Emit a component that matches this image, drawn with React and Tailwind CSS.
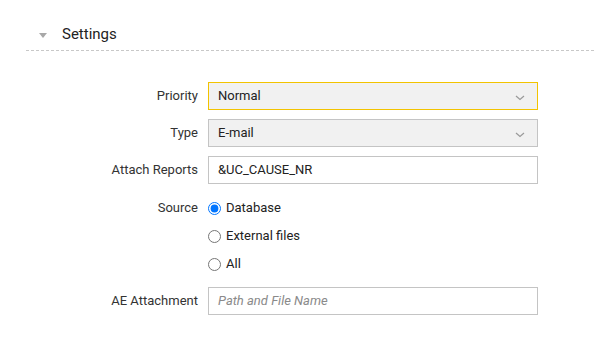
import React from "react";

function Chevron() {
  return (
    <svg width="10" height="6" viewBox="0 0 10 6" className="absolute right-[12px] top-[12px]">
      <path d="M1 1 L5 4.5 L9 1" fill="none" stroke="#9a9a9a" strokeWidth="1.2" />
    </svg>
  );
}

function Label({ children }) {
  return (
    <div className="h-[28px] flex items-center justify-end text-[13px] text-[#333]">{children}</div>
  );
}

function Radio({ checked, label }) {
  return (
    <label className="h-[28px] flex items-center gap-[5px] text-[13px] text-[#222]">
      <input type="radio" name="src" defaultChecked={checked} className="m-0 w-[13px] h-[13px]" />
      <span>{label}</span>
    </label>
  );
}

export default function App() {
  return (
    <div className="w-[594px] h-[344px] bg-white" style={{ fontFamily: "Roboto, 'Liberation Sans', sans-serif" }}>
      <div className="pl-[26px] pt-[21px]">
        <div className="h-[30px] flex items-center border-b border-dashed border-[#c8c8c8]">
          <svg width="8" height="5" viewBox="0 0 8 5" className="ml-[13px] mt-[-1px]">
            <path d="M0 0 L8 0 L4 5 Z" fill="#a8a8a8" />
          </svg>
          <span className="ml-[15px] text-[15px] text-[#222] mt-[-2px]">Settings</span>
        </div>
      </div>
      <div className="grid grid-cols-[173px_330px] gap-x-[10px] gap-y-[9px] pl-[25px] pt-[31px]">
        <Label>Priority</Label>
        <div className="relative h-[28px] border border-[#f2c300] bg-[#f1f1f1] flex items-center pl-[9px] text-[13px] text-[#222]">
          Normal
          <Chevron />
        </div>
        <Label>Type</Label>
        <div className="relative h-[28px] border border-[#c4c4c4] bg-[#f1f1f1] flex items-center pl-[9px] text-[13px] text-[#222]">
          E-mail
          <Chevron />
        </div>
        <Label>Attach Reports</Label>
        <div className="h-[28px] border border-[#c4c4c4] bg-white flex items-center pl-[9px] text-[13px] text-[#222]">
          &amp;UC_CAUSE_NR
        </div>
        <div className="flex flex-col pt-[1px]">
          <Label>Source</Label>
        </div>
        <div className="flex flex-col pt-[1px]">
          <Radio checked label="Database" />
          <Radio label="External files" />
          <Radio label="All" />
        </div>
        <Label>AE Attachment</Label>
        <div className="h-[28px] border border-[#c4c4c4] bg-white flex items-center pl-[9px] text-[13px] italic text-[#8a8a8a]">
          Path and File Name
        </div>
      </div>
    </div>
  );
}
